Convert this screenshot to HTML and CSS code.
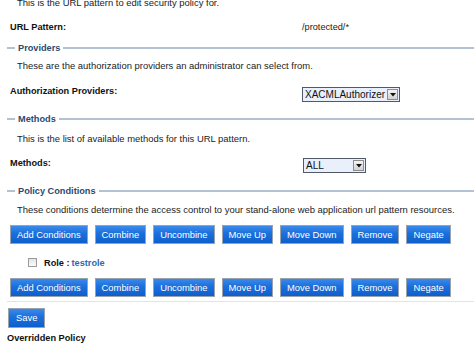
FILE: index.html
```html
<!DOCTYPE html>
<html>
<head>
<meta charset="utf-8">
<link rel="stylesheet" href="styles.css">
</head>
<body>
<div class="page">
  <p class="desc intro">This is the URL pattern to edit security policy for.</p>
  <div class="field field-url">
    <span class="label">URL Pattern:</span>
    <span class="value">/protected/*</span>
  </div>

  <div class="legend legend-providers"><span class="lline"></span><span class="ltext">Providers</span><span class="rline"></span></div>
  <p class="desc desc-providers">These are the authorization providers an administrator can select from.</p>
  <div class="field field-auth">
    <span class="label">Authorization Providers:</span>
    <div class="select select-auth"><span class="sval">XACMLAuthorizer</span><span class="sbtn"><svg width="6" height="4" viewBox="0 0 6 4"><path d="M0 0H6L3 3.5Z" fill="#111"/></svg></span></div>
  </div>

  <div class="legend legend-methods"><span class="lline"></span><span class="ltext">Methods</span><span class="rline"></span></div>
  <p class="desc desc-methods">This is the list of available methods for this URL pattern.</p>
  <div class="field field-methods">
    <span class="label">Methods:</span>
    <div class="select select-all"><span class="sval">ALL</span><span class="sbtn"><svg width="6" height="4" viewBox="0 0 6 4"><path d="M0 0H6L3 3.5Z" fill="#111"/></svg></span></div>
  </div>

  <div class="legend legend-policy"><span class="lline"></span><span class="ltext">Policy Conditions</span><span class="rline"></span></div>
  <p class="desc desc-policy">These conditions determine the access control to your stand-alone web application url pattern resources.</p>

  <div class="buttons buttons-top">
    <button class="btn">Add Conditions</button>
    <button class="btn">Combine</button>
    <button class="btn">Uncombine</button>
    <button class="btn">Move Up</button>
    <button class="btn">Move Down</button>
    <button class="btn">Remove</button>
    <button class="btn">Negate</button>
  </div>

  <div class="role">
    <span class="checkbox"></span>
    <span class="role-label">Role :</span>
    <span class="role-name">testrole</span>
  </div>

  <div class="buttons buttons-bottom">
    <button class="btn">Add Conditions</button>
    <button class="btn">Combine</button>
    <button class="btn">Uncombine</button>
    <button class="btn">Move Up</button>
    <button class="btn">Move Down</button>
    <button class="btn">Remove</button>
    <button class="btn">Negate</button>
  </div>

  <div class="divider"></div>

  <button class="btn btn-save">Save</button>
  <div class="overridden">Overridden Policy</div>
</div>
</body>
</html>
```

FILE: styles.css
```css
html, body {
  margin: 0;
  padding: 0;
  background: #ffffff;
  overflow: hidden;
}

body {
  font-family: "Liberation Sans", Arial, sans-serif;
  font-size: 9.2px;
  color: #1a1a1a;
}

.page {
  width: 474px;
  height: 346px;
}

p {
  margin: 0;
}

.desc {
  height: 12px;
  line-height: 12px;
  padding-left: 17px;
  color: #222;
  font-size: 9.45px;
  white-space: nowrap;
}

.intro { margin-top: -3px; }

.field {
  display: flex;
  align-items: flex-start;
  padding-left: 10px;
  line-height: 12px;
}

.field .label {
  width: 292px;
  font-weight: bold;
  color: #111;
  flex: none;
}

.field-url { margin-top: 12px; height: 12px; }
.field-url .value { color: #222; }

.legend {
  display: flex;
  align-items: center;
  height: 12px;
  line-height: 12px;
  padding-left: 7px;
}

.lline {
  width: 8px;
  height: 2px;
  background: #b3c2d3;
  flex: none;
}

.rline {
  flex: 1;
  height: 2px;
  background: #b3c2d3;
}

.ltext {
  margin: 0 3px;
  font-weight: bold;
  color: #2c4a72;
}

.legend-providers { margin-top: 9px; }
.desc-providers { margin-top: 6px; }
.field-auth { margin-top: 13px; height: 17px; }

.legend-methods { margin-top: 11px; }
.desc-methods { margin-top: 8px; }
.field-methods { margin-top: 12px; height: 16px; }

.legend-policy { margin-top: 12px; }
.desc-policy { margin-top: 7px; }

.select {
  display: flex;
  height: 15px;
  box-sizing: border-box;
  border: 1px solid #4f5a66;
  background: #e9effb;
  font-size: 10px;
  line-height: 13px;
  color: #111;
}

.select-auth { width: 98px; margin-top: 2px; }
.select-all { width: 63px; margin-top: 1px; margin-left: 1px; }

.sval {
  flex: 1;
  padding-left: 2px;
  white-space: nowrap;
  overflow: hidden;
}

.sbtn {
  width: 11px;
  margin: 1px;
  box-sizing: border-box;
  border: 1px solid #8c8c8c;
  background: linear-gradient(#f4f4f4, #d2d2d2);
  display: flex;
  align-items: center;
  justify-content: center;
}

.buttons {
  display: flex;
  gap: 7px;
  padding-left: 10px;
}

.buttons-top { margin-top: 9px; }
.buttons-bottom { margin-top: 9px; }

.btn {
  height: 19px;
  box-sizing: border-box;
  padding: 0 6px;
  border: 1px solid #99a3ad;
  background: linear-gradient(#3a8aea 0%, #1b6fdc 45%, #0e5fcc 100%);
  color: #ffffff;
  font-family: "Liberation Sans", Arial, sans-serif;
  font-size: 9.4px;
  line-height: 17px;
  white-space: nowrap;
  margin: 0;
}

.role {
  display: flex;
  align-items: center;
  height: 12px;
  line-height: 12px;
  margin-top: 13px;
  padding-left: 28px;
}

.checkbox {
  width: 9px;
  height: 9px;
  box-sizing: border-box;
  border: 1px solid #9a9a9a;
  background: linear-gradient(#e4e4e4, #fbfbfb);
  margin-right: 7px;
  margin-top: -2px;
}

.role-label {
  font-weight: bold;
  color: #111;
  margin-right: 2px;
}

.role-name {
  color: #2f68b3;
  font-weight: bold;
}

.divider {
  margin-top: 4px;
  margin-left: 7px;
  height: 1px;
  background: #e3e3e3;
}

.btn-save {
  display: block;
  margin-top: 6px;
  margin-left: 8px;
  height: 20px;
  padding: 0 7px;
  line-height: 18px;
}

.overridden {
  margin-top: 4px;
  padding-left: 7px;
  height: 12px;
  line-height: 12px;
  font-weight: bold;
  color: #111;
}
```
